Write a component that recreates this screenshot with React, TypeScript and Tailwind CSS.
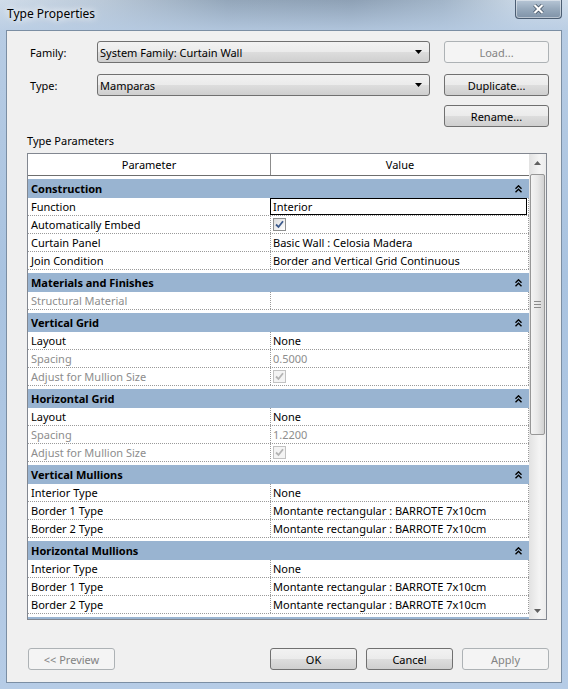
import React from 'react'

type Row = {
  name: string
  value?: string
  check?: boolean
  disabled?: boolean
  selected?: boolean
}

type Group = { name: string; rows: Row[] }

const MULLION = 'Montante rectangular : BARROTE 7x10cm'

const groups: Group[] = [
  {
    name: 'Construction',
    rows: [
      { name: 'Function', value: 'Interior', selected: true },
      { name: 'Automatically Embed', check: true },
      { name: 'Curtain Panel', value: 'Basic Wall : Celosia Madera' },
      { name: 'Join Condition', value: 'Border and Vertical Grid Continuous' },
    ],
  },
  {
    name: 'Materials and Finishes',
    rows: [{ name: 'Structural Material', value: '', disabled: true }],
  },
  {
    name: 'Vertical Grid',
    rows: [
      { name: 'Layout', value: 'None' },
      { name: 'Spacing', value: '0.5000', disabled: true },
      { name: 'Adjust for Mullion Size', check: true, disabled: true },
    ],
  },
  {
    name: 'Horizontal Grid',
    rows: [
      { name: 'Layout', value: 'None' },
      { name: 'Spacing', value: '1.2200', disabled: true },
      { name: 'Adjust for Mullion Size', check: true, disabled: true },
    ],
  },
  {
    name: 'Vertical Mullions',
    rows: [
      { name: 'Interior Type', value: 'None' },
      { name: 'Border 1 Type', value: MULLION },
      { name: 'Border 2 Type', value: MULLION },
    ],
  },
  {
    name: 'Horizontal Mullions',
    rows: [
      { name: 'Interior Type', value: 'None' },
      { name: 'Border 1 Type', value: MULLION },
      { name: 'Border 2 Type', value: MULLION },
    ],
  },
]

const Chevrons = () => (
  <svg width="7" height="8" viewBox="0 0 7 8" fill="none" stroke="#000" strokeWidth="1.4">
    <path d="M0.5 3.8 L3.5 0.8 L6.5 3.8" />
    <path d="M0.5 7.3 L3.5 4.3 L6.5 7.3" />
  </svg>
)

const CheckBox = ({ disabled }: { disabled?: boolean }) => (
  <div
    className={`w-[13px] h-[13px] border flex items-center justify-center ${
      disabled
        ? 'border-[#c2c2c2] bg-[#f4f4f4]'
        : 'border-[#8e8f8f] bg-[linear-gradient(to_bottom_right,#dcdcdc,#ffffff)]'
    }`}
  >
    <svg width="9" height="9" viewBox="0 0 9 9" fill="none">
      <path
        d="M1 4.5 L3.5 7 L8 1.2"
        stroke={disabled ? '#b4b4b4' : '#3c5a8c'}
        strokeWidth="1.8"
      />
    </svg>
  </div>
)

const Dropdown = ({ text }: { text: string }) => (
  <div className="w-[333px] h-[22px] rounded-[3px] border border-[#707070] bg-[linear-gradient(to_bottom,#f2f2f2_0%,#ebebeb_50%,#dddddd_51%,#cfcfcf_100%)] flex items-center pl-[2px] pr-[7px]">
    <span className="flex-1">{text}</span>
    <svg width="7" height="4" viewBox="0 0 7 4">
      <path d="M0 0 H7 L3.5 4 Z" fill="#000" />
    </svg>
  </div>
)

const Button = ({ label, disabled, w = 'w-[105px]' }: { label: string; disabled?: boolean; w?: string }) => (
  <div
    className={`${w} h-[22px] rounded-[3px] border flex items-center justify-center ${
      disabled
        ? 'border-[#adb2b5] bg-[#f4f4f4] text-[#838383]'
        : 'border-[#707070] bg-[linear-gradient(to_bottom,#f2f2f2_0%,#ebebeb_50%,#dddddd_51%,#cfcfcf_100%)] text-black'
    }`}
  >
    {label}
  </div>
)

const GroupBlock = ({ group }: { group: Group }) => (
  <div className="pt-[3px] bg-white">
    <div className="h-[19px] bg-[#99b4d1] flex items-center pl-[3px] pr-[7px] font-bold">
      <span className="flex-1">{group.name}</span>
      <Chevrons />
    </div>
    {group.rows.map((row, i) => (
      <div key={i} className="h-[18px] flex border-b border-dotted border-[#9a9a9a] bg-white">
        <div
          className={`w-[243px] border-r border-dotted border-[#9a9a9a] pl-[3px] flex items-center ${
            row.disabled ? 'text-[#8d8d8d]' : ''
          }`}
        >
          {row.name}
        </div>
        <div
          className={`relative flex-1 pl-[2px] flex items-center border-r border-dotted border-[#9a9a9a] ${
            row.disabled ? 'text-[#8d8d8d]' : ''
          }`}
        >
          {row.check ? <CheckBox disabled={row.disabled} /> : row.value}
          {row.selected && (
            <div className="absolute left-[-1px] top-0 right-[1px] bottom-0 border border-black" />
          )}
        </div>
      </div>
    ))}
  </div>
)

const ScrollBar = () => (
  <div className="w-[17px] flex flex-col bg-[linear-gradient(to_right,#e2e2e2,#f4f4f4_60%,#ececec)]">
    <div className="h-[17px] flex items-center justify-center">
      <svg width="7" height="4" viewBox="0 0 7 4">
        <path d="M0 4 H7 L3.5 0 Z" fill="#606060" />
      </svg>
    </div>
    <div className="mt-[3px] mx-[1px] h-[261px] rounded-[2px] border border-[#979797] bg-[linear-gradient(to_right,#f4f4f4,#e8e8e8_50%,#d2d2d2)] flex flex-col items-center justify-center gap-[2px]">
      <div className="w-[7px] h-px bg-[#8a8a8a]" />
      <div className="w-[7px] h-px bg-[#8a8a8a]" />
      <div className="w-[7px] h-px bg-[#8a8a8a]" />
    </div>
    <div className="flex-1" />
    <div className="h-[17px] flex items-center justify-center">
      <svg width="7" height="4" viewBox="0 0 7 4">
        <path d="M0 0 H7 L3.5 4 Z" fill="#606060" />
      </svg>
    </div>
  </div>
)

export default function App() {
  return (
    <div className="w-[568px] h-[689px] flex flex-col bg-[linear-gradient(to_bottom,#b9cde4,#a9c3e0_40%,#b6cce6)] font-['Noto_Sans',sans-serif] text-[11px] text-black leading-none overflow-hidden">
      {/* Title bar */}
      <div className="relative h-[30px] bg-[linear-gradient(to_right,#c8d6e5_0%,#aebfd1_18%,#8197ae_40%,#7a90a8_62%,#92a8bf_78%,#c2d2e2_92%,#c8d7e6_100%)]">
        <div className="absolute inset-0 bg-[linear-gradient(to_bottom,rgba(255,255,255,0.15),rgba(185,205,228,0.85))]" />
        <div className="relative pl-[7px] pt-[8px] text-[12px] [text-shadow:0_0_6px_#ffffff,0_0_10px_#ffffff]">
          Type Properties
        </div>
        <div className="absolute top-0 right-[6px] w-[47px] h-[19px] rounded-b-[4px] border border-t-0 border-[#4b5d72] bg-[linear-gradient(to_bottom,#b7c6d6,#97a9bc_50%,#7f93a8)] shadow-[inset_0_0_0_1px_rgba(255,255,255,0.45)] flex items-center justify-center">
          <svg width="11" height="10" viewBox="0 0 11 10">
            <path d="M1.5 1 L9.5 9 M9.5 1 L1.5 9" stroke="#3a4a5c" strokeWidth="3.6" />
            <path d="M1.5 1 L9.5 9 M9.5 1 L1.5 9" stroke="#ffffff" strokeWidth="2.2" />
          </svg>
        </div>
      </div>

      {/* Client area */}
      <div className="mx-[6px] mb-[6px] flex-1 border border-[#7b8ea3] bg-[#f0f0f0] pl-[20px] pr-[12px] pt-[10px] flex flex-col">
        <div className="flex items-center">
          <div className="w-[70px] pl-[3px]">Family:</div>
          <Dropdown text="System Family: Curtain Wall" />
          <div className="ml-[14px]">
            <Button label="Load..." disabled />
          </div>
        </div>
        <div className="flex items-center mt-[11px]">
          <div className="w-[70px] pl-[3px]">Type:</div>
          <Dropdown text="Mamparas" />
          <div className="ml-[14px]">
            <Button label="Duplicate..." />
          </div>
        </div>
        <div className="flex justify-end mt-[9px]">
          <Button label="Rename..." />
        </div>

        <div className="mt-[8px] h-[12px]">Type Parameters</div>

        {/* Parameter table */}
        <div className="mt-[6px] w-[520px] h-[467px] border border-[#828790] bg-white flex overflow-hidden">
          <div className="w-[502px] flex flex-col overflow-hidden">
            <div className="h-[22px] shrink-0 flex border-b border-[#6e6e6e] bg-white">
              <div className="w-[243px] border-r border-[#8c8c8c] flex items-center justify-center">
                Parameter
              </div>
              <div className="flex-1 flex items-center justify-center">Value</div>
            </div>
            {groups.map((g) => (
              <GroupBlock key={g.name} group={g} />
            ))}
            {/* next group, scrolled out of view */}
            <div className="shrink-0 pt-[3px] bg-white">
              <div className="h-[19px] bg-[#99b4d1]" />
            </div>
          </div>
          <ScrollBar />
        </div>

        {/* Footer buttons */}
        <div className="mt-[28px] flex items-center">
          <div className="ml-[1px]">
            <Button label="<< Preview" disabled w="w-[87px]" />
          </div>
          <div className="flex-1" />
          <div className="flex gap-[9px]">
            <Button label="OK" w="w-[87px]" />
            <Button label="Cancel" w="w-[87px]" />
            <Button label="Apply" disabled w="w-[87px]" />
          </div>
        </div>
      </div>
    </div>
  )
}
